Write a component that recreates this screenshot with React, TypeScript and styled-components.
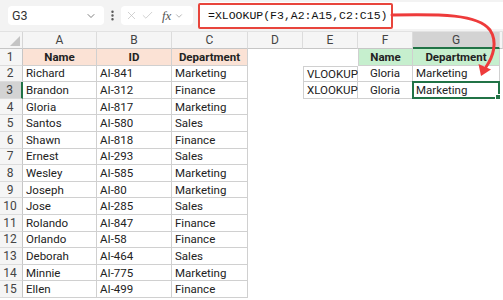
import React from "react";
import styled, { createGlobalStyle, css } from "styled-components";
import { ChevronDown, X, Check, EllipsisVertical } from "lucide-react";

const Global = createGlobalStyle`
  html, body { margin: 0; padding: 0; background: #fff; }
  body { width: 503px; height: 300px; overflow: hidden; font-family: Roboto, "Noto Sans", Arial, sans-serif; }
  #root { position: relative; width: 503px; height: 300px; overflow: hidden; }
`;

const Toolbar = styled.div`
  height: 32px;
  box-sizing: border-box;
  background: #f3f3f3;
  display: flex;
  align-items: center;
  padding: 0 0 0 8px;
  border-bottom: 1px solid #e2e2e2;
`;

const NameBox = styled.div`
  width: 96px;
  height: 19px;
  box-sizing: border-box;
  background: #fff;
  border-radius: 4px;
  display: flex;
  align-items: center;
  justify-content: space-between;
  padding: 0 7px 0 4px;
  font-size: 12.5px;
  color: #333;
`;

const Dots = styled.div`
  width: 17px;
  display: flex;
  justify-content: center;
  color: #555;
`;

const FuncBox = styled.div`
  width: 72px;
  height: 19px;
  box-sizing: border-box;
  background: #fff;
  border-radius: 4px;
  display: flex;
  align-items: center;
  gap: 3px;
  padding: 0 2px 0 4px;
  color: #bdbdbd;
`;

const Fx = styled.span`
  font-family: "Liberation Serif", "DejaVu Serif", serif;
  font-style: italic;
  font-size: 13px;
  color: #555;
  margin-left: 5px;
`;

const FormulaBar = styled.div`
  flex: 1;
  height: 27px;
  margin-left: 5px;
  background: #fff;
  border-radius: 4px 0 0 4px;
  display: flex;
  align-items: center;
`;

const Formula = styled.div`
  height: 26px;
  box-sizing: border-box;
  border: 2px solid #e8453c;
  border-radius: 2px;
  display: flex;
  align-items: center;
  padding: 0 4px 0 8px;
  width: 195px;
  font-family: "Liberation Mono", "DejaVu Sans Mono", monospace;
  font-size: 11.5px;
  color: #111;
`;

const Sheet = styled.div`
  display: grid;
  grid-template-columns: 23px 74px 75px 76px 55px 55px 55px 87px 3px;
  grid-template-rows: 17px repeat(15, 16.6px);
  font-size: 11.5px;
  color: #222;
`;

const Corner = styled.div`
  background: #f5f5f5;
  border-right: 1px solid #d6d6d6;
  border-bottom: 1px solid #c6c6c6;
  position: relative;
  &::after {
    content: "";
    position: absolute;
    right: 2px;
    bottom: 2px;
    width: 0;
    height: 0;
    border-left: 10px solid transparent;
    border-bottom: 10px solid #c4c4c4;
  }
`;

const ColHead = styled.div<{ $active?: boolean }>`
  background: ${(p) => (p.$active ? "#d3d3d3" : "#f5f5f5")};
  border-right: 1px solid #dcdcdc;
  border-bottom: ${(p) => (p.$active ? "2px solid #217346" : "1px solid #c6c6c6")};
  display: flex;
  align-items: center;
  justify-content: center;
  font-size: 12px;
  color: #444;
`;

const RowHead = styled.div<{ $active?: boolean }>`
  background: ${(p) => (p.$active ? "#d3d3d3" : "#f5f5f5")};
  border-right: ${(p) => (p.$active ? "2px solid #217346" : "1px solid #c6c6c6")};
  border-bottom: 1px solid #dcdcdc;
  display: flex;
  align-items: center;
  justify-content: center;
  padding-right: 2px;
  font-size: 12px;
  color: #444;
`;

type CellProps = {
  $fill?: string;
  $bold?: boolean;
  $align?: "left" | "center";
  $grid?: boolean;
  $bl?: boolean;
  $bt?: boolean;
  $selected?: boolean;
};

const Cell = styled.div<CellProps>`
  position: relative;
  box-sizing: border-box;
  background: ${(p) => p.$fill || "#fff"};
  font-weight: ${(p) => (p.$bold ? 700 : 400)};
  display: flex;
  align-items: center;
  justify-content: ${(p) => (p.$align === "center" ? "center" : "flex-start")};
  padding-left: ${(p) => (p.$align === "center" ? "0" : "3px")};
  white-space: nowrap;
  overflow: visible;
  ${(p) =>
    p.$grid &&
    css`
      border-right: 1px solid #d0d0d0;
      border-bottom: 1px solid #d0d0d0;
    `}
  ${(p) => p.$bl && css`border-left: 1px solid #d0d0d0;`}
  ${(p) => p.$bt && css`border-top: 1px solid #d0d0d0;`}
`;

const Selection = styled.div`
  position: absolute;
  left: -1px;
  top: -1px;
  right: -1px;
  bottom: -1px;
  border: 2px solid #217346;
  pointer-events: none;
  &::after {
    content: "";
    position: absolute;
    right: -4px;
    bottom: -4px;
    width: 5px;
    height: 5px;
    background: #217346;
    border: 1px solid #fff;
  }
`;

const Overlay = styled.svg`
  position: absolute;
  left: 0;
  top: 0;
  pointer-events: none;
`;

const data: [string, string, string][] = [
  ["Richard", "AI-841", "Marketing"],
  ["Brandon", "AI-312", "Finance"],
  ["Gloria", "AI-817", "Marketing"],
  ["Santos", "AI-580", "Sales"],
  ["Shawn", "AI-818", "Finance"],
  ["Ernest", "AI-293", "Sales"],
  ["Wesley", "AI-585", "Marketing"],
  ["Joseph", "AI-80", "Marketing"],
  ["Jose", "AI-285", "Sales"],
  ["Rolando", "AI-847", "Finance"],
  ["Orlando", "AI-58", "Finance"],
  ["Deborah", "AI-464", "Sales"],
  ["Minnie", "AI-775", "Marketing"],
  ["Ellen", "AI-499", "Finance"],
];

const cols = ["A", "B", "C", "D", "E", "F", "G"];
const PEACH = "#fbe2d5";
const GREEN = "#c6efce";

function rightSide(r: number) {
  // r = row number (1-based); returns cells for D..G and filler
  if (r === 1) {
    return [
      <Cell key="d" />,
      <Cell key="e" />,
      <Cell key="f" $grid $bl $fill={GREEN} $bold $align="center">Name</Cell>,
      <Cell key="g" $grid $fill={GREEN} $bold $align="center">Department</Cell>,
    ];
  }
  if (r === 2 || r === 3) {
    const label = r === 2 ? "VLOOKUP" : "XLOOKUP";
    return [
      <Cell key="d" />,
      <Cell key="e" $grid $bl $bt={r === 2}>{label}</Cell>,
      <Cell key="f" $grid $align="center">Gloria</Cell>,
      <Cell key="g" $grid>
        Marketing
        {r === 3 && <Selection />}
      </Cell>,
    ];
  }
  return [<Cell key="d" />, <Cell key="e" />, <Cell key="f" />, <Cell key="g" />];
}

export default function App() {
  return (
    <>
      <Global />
      <Toolbar>
        <NameBox>
          <span>G3</span>
          <ChevronDown size={12} color="#555" strokeWidth={1.5} />
        </NameBox>
        <Dots>
          <EllipsisVertical size={13} strokeWidth={2.5} />
        </Dots>
        <FuncBox>
          <X size={13} strokeWidth={1.3} />
          <Check size={13} strokeWidth={1.3} />
          <Fx>fx</Fx>
          <ChevronDown size={10} color="#888" strokeWidth={1.5} />
        </FuncBox>
        <FormulaBar>
          <Formula>=XLOOKUP(F3,A2:A15,C2:C15)</Formula>
        </FormulaBar>
      </Toolbar>
      <Sheet>
        <Corner />
        {cols.map((c) => (
          <ColHead key={c} $active={c === "G"}>
            {c}
          </ColHead>
        ))}
        <ColHead />
        <RowHead>1</RowHead>
        <Cell $grid $fill={PEACH} $bold $align="center">Name</Cell>
        <Cell $grid $fill={PEACH} $bold $align="center">ID</Cell>
        <Cell $grid $fill={PEACH} $bold $align="center">Department</Cell>
        {rightSide(1)}
        <Cell />
        {data.map((row, i) => {
          const r = i + 2;
          return (
            <React.Fragment key={r}>
              <RowHead $active={r === 3}>{r}</RowHead>
              <Cell $grid>{row[0]}</Cell>
              <Cell $grid>{row[1]}</Cell>
              <Cell $grid>{row[2]}</Cell>
              {rightSide(r)}
              <Cell />
            </React.Fragment>
          );
        })}
      </Sheet>
      <Overlay width="503" height="300" viewBox="0 0 503 300">
        <path
          d="M392 15 C 440 14, 478 14, 490 30 C 498 42, 493 57, 486 67"
          fill="none"
          stroke="#ee3b3b"
          strokeWidth="3"
          strokeLinecap="round"
        />
        <polygon points="481,76 478.5,64 491,69.5" fill="#ee3b3b" />
      </Overlay>
    </>
  );
}
